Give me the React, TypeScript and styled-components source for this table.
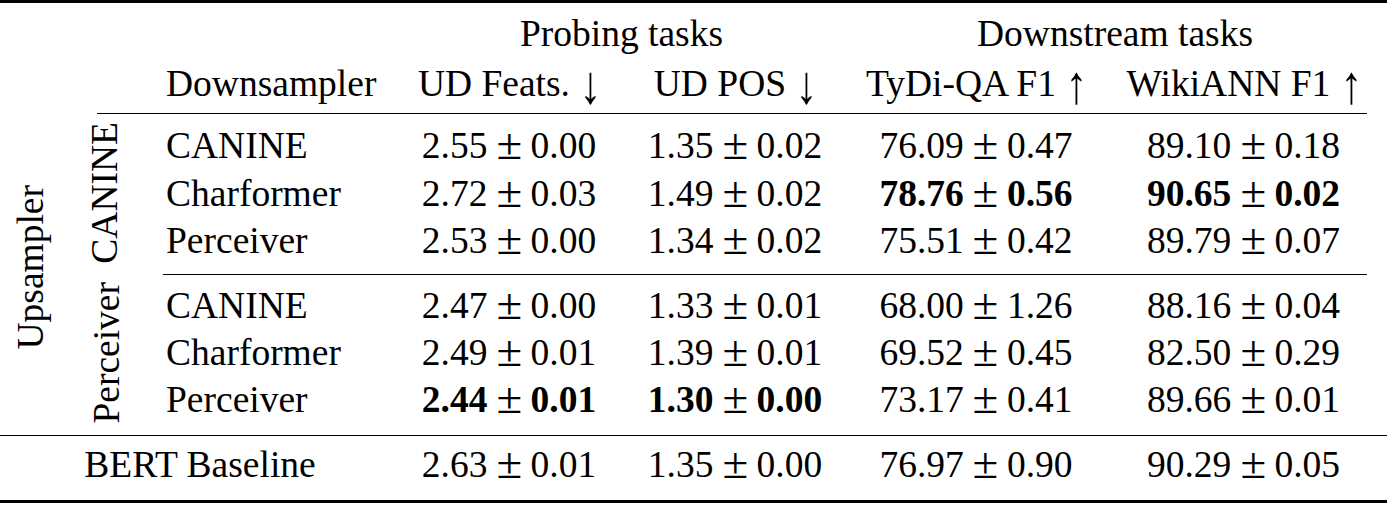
import styled, { createGlobalStyle } from "styled-components";

const Global = createGlobalStyle`
  body {
    margin: 0;
    background: #ffffff;
  }
`;

const DATA_COLS = "218px 234px 248px 1fr";

interface Score {
  mean: string;
  std: string;
  best?: boolean;
}

interface ResultRow {
  name: string;
  scores: Score[];
}

interface Group {
  label: string;
  nudge: number;
  rows: ResultRow[];
}

const groups: Group[] = [
  {
    label: "CANINE",
    nudge: 5,
    rows: [
      {
        name: "CANINE",
        scores: [
          { mean: "2.55", std: "0.00" },
          { mean: "1.35", std: "0.02" },
          { mean: "76.09", std: "0.47" },
          { mean: "89.10", std: "0.18" }
        ]
      },
      {
        name: "Charformer",
        scores: [
          { mean: "2.72", std: "0.03" },
          { mean: "1.49", std: "0.02" },
          { mean: "78.76", std: "0.56", best: true },
          { mean: "90.65", std: "0.02", best: true }
        ]
      },
      {
        name: "Perceiver",
        scores: [
          { mean: "2.53", std: "0.00" },
          { mean: "1.34", std: "0.02" },
          { mean: "75.51", std: "0.42" },
          { mean: "89.79", std: "0.07" }
        ]
      }
    ]
  },
  {
    label: "Perceiver",
    nudge: 1,
    rows: [
      {
        name: "CANINE",
        scores: [
          { mean: "2.47", std: "0.00" },
          { mean: "1.33", std: "0.01" },
          { mean: "68.00", std: "1.26" },
          { mean: "88.16", std: "0.04" }
        ]
      },
      {
        name: "Charformer",
        scores: [
          { mean: "2.49", std: "0.01" },
          { mean: "1.39", std: "0.01" },
          { mean: "69.52", std: "0.45" },
          { mean: "82.50", std: "0.29" }
        ]
      },
      {
        name: "Perceiver",
        scores: [
          { mean: "2.44", std: "0.01", best: true },
          { mean: "1.30", std: "0.00", best: true },
          { mean: "73.17", std: "0.41" },
          { mean: "89.66", std: "0.01" }
        ]
      }
    ]
  }
];

const baseline: Score[] = [
  { mean: "2.63", std: "0.01" },
  { mean: "1.35", std: "0.00" },
  { mean: "76.97", std: "0.90" },
  { mean: "90.29", std: "0.05" }
];

const ScoreValue = ({ mean, std, best }: Score) => (
  <>
    <Num $bold={best}>{mean}</Num>
    <PlusMinus>±</PlusMinus>
    <Num $bold={best}>{std}</Num>
  </>
);

const App = () => {
  // first data row sits on grid row 5, the second group starts after the midrule
  const groupStart = [5, 9];

  return (
    <>
      <Global />
      <Table>
        <Rule $col="1 / -1" $row={1} $weight={3} $after={6} />

        <SpanHeading $col="4 / 6" $row={2}>
          Probing tasks
        </SpanHeading>
        <SpanHeading $col="6 / -1" $row={2}>
          Downstream tasks
        </SpanHeading>

        <HeaderRow $row={3}>
          <NameCell>Downsampler</NameCell>
          <ValueCell>
            UD Feats. <Arrow>↓</Arrow>
          </ValueCell>
          <ValueCell>
            UD POS <Arrow>↓</Arrow>
          </ValueCell>
          <ValueCell>
            TyDi-QA F1 <Arrow>↑</Arrow>
          </ValueCell>
          <ValueCell>
            WikiANN F1 <Arrow>↑</Arrow>
          </ValueCell>
        </HeaderRow>

        <Rule
          $col="2 / -1"
          $row={4}
          $weight={1.3}
          $before={4}
          $after={8}
          $left={35}
          $right={20}
        />

        <SideLabel $col={1} $rows="5 / 12" $lift={12}>
          <SideText>Upsampler</SideText>
        </SideLabel>

        {groups.map((group, g) => (
          <SideLabel
            key={group.label}
            $col={2}
            $rows={`${groupStart[g]} / ${groupStart[g] + 3}`}
            $nudge={group.nudge}
          >
            <SideText>{group.label}</SideText>
          </SideLabel>
        ))}

        {groups.map((group, g) =>
          group.rows.map((row, r) => (
            <DataRow key={`${group.label}-${row.name}`} $row={groupStart[g] + r}>
              <NameCell>{row.name}</NameCell>
              {row.scores.map((score, i) => (
                <ValueCell key={i}>
                  <ScoreValue {...score} />
                </ValueCell>
              ))}
            </DataRow>
          ))
        )}

        <Rule
          $col="3 / -1"
          $row={8}
          $weight={1.3}
          $before={10}
          $after={6.5}
          $left={11}
          $right={20}
        />

        <Rule $col="1 / -1" $row={12} $weight={1.3} $before={11.5} $after={4.5} />

        <BaselineRow $row={13}>
          <ValueCell>BERT Baseline</ValueCell>
          {baseline.map((score, i) => (
            <ValueCell key={i}>
              <ScoreValue {...score} />
            </ValueCell>
          ))}
        </BaselineRow>

        <Rule $col="1 / -1" $row={14} $weight={3} $before={12.6} />
      </Table>
    </>
  );
};

const Table = styled.div`
  display: grid;
  grid-template-columns: 62px 90px 248px 218px 234px 248px 1fr;
  width: 1387px;
  font-family: "Liberation Serif", "Times New Roman", serif;
  font-size: 37.5px;
  color: #000000;
`;

const Rule = styled.div<{
  $col: string;
  $row: number;
  $weight: number;
  $before?: number;
  $after?: number;
  $left?: number;
  $right?: number;
}>`
  grid-column: ${(p) => p.$col};
  grid-row: ${(p) => p.$row};
  height: ${(p) => p.$weight}px;
  margin: ${(p) => p.$before || 0}px ${(p) => p.$right || 0}px
    ${(p) => p.$after || 0}px ${(p) => p.$left || 0}px;
  background: #000000;
`;

const SpanHeading = styled.div<{ $col: string; $row: number }>`
  grid-column: ${(p) => p.$col};
  grid-row: ${(p) => p.$row};
  padding-right: 9px;
  line-height: 50px;
  text-align: center;
  white-space: nowrap;
`;

const HeaderRow = styled.div<{ $row: number }>`
  grid-column: 3 / -1;
  grid-row: ${(p) => p.$row};
  display: grid;
  grid-template-columns: 248px ${DATA_COLS};
  line-height: 50px;
`;

const DataRow = styled.div<{ $row: number }>`
  grid-column: 3 / -1;
  grid-row: ${(p) => p.$row};
  display: grid;
  grid-template-columns: 248px ${DATA_COLS};
  line-height: 47px;
`;

const BaselineRow = styled(DataRow)`
  grid-column: 1 / -1;
  grid-template-columns: 400px ${DATA_COLS};
`;

const NameCell = styled.div`
  padding-left: 14px;
  white-space: nowrap;
`;

const ValueCell = styled.div`
  text-align: center;
  white-space: nowrap;
`;

const Num = styled.span<{ $bold?: boolean }>`
  font-weight: ${(p) => (p.$bold ? 700 : 400)};
`;

const PlusMinus = styled.span`
  display: inline-block;
  margin: 0 0.3em;
  font-weight: 400;
  transform: scale(1.25, 1.2) translateY(-1px);
`;

const Arrow = styled.span`
  display: inline-block;
  margin-left: 2px;
  transform: scale(1.15, 1.45) translateY(1px);
`;

const SideLabel = styled.div<{
  $col: number;
  $rows: string;
  $lift?: number;
  $nudge?: number;
}>`
  grid-column: ${(p) => p.$col};
  grid-row: ${(p) => p.$rows};
  display: flex;
  align-items: center;
  justify-content: center;
  padding-bottom: ${(p) => p.$lift || 0}px;
  padding-right: ${(p) => p.$nudge || 0}px;
`;

const SideText = styled.span`
  writing-mode: vertical-rl;
  transform: rotate(180deg);
  line-height: 1;
  white-space: nowrap;
`;

export default App;
